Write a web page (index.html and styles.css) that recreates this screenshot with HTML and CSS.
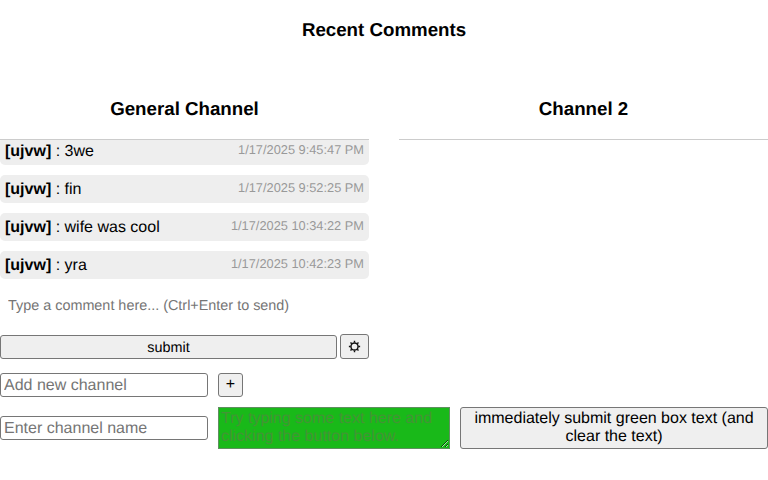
FILE: index.html
```html
<!DOCTYPE html>
<html lang="en">
<head>
<meta charset="utf-8">
<title>Recent Comments</title>
<link rel="stylesheet" href="styles.css">
</head>
<body>
<h3 class="page-title">Recent Comments</h3>
<div class="channels">
  <section class="channel">
    <h3 class="channel-title">General Channel</h3>
    <div class="messages">
      <div class="message"><span><b>[ujvw]</b> : 3we</span><span class="time">1/17/2025 9:45:47 PM</span></div>
      <div class="message"><span><b>[ujvw]</b> : fin</span><span class="time">1/17/2025 9:52:25 PM</span></div>
      <div class="message"><span><b>[ujvw]</b> : wife was cool</span><span class="time">1/17/2025 10:34:22 PM</span></div>
      <div class="message"><span><b>[ujvw]</b> : yra</span><span class="time">1/17/2025 10:42:23 PM</span></div>
    </div>
    <input class="comment" type="text" placeholder="Type a comment here... (Ctrl+Enter to send)">
    <div class="submit-row">
      <button class="btn submit" type="button">submit</button>
      <button class="btn gear" type="button" aria-label="settings">
        <svg class="gear-icon" viewBox="0 0 12 12" width="13" height="13" aria-hidden="true">
          <circle cx="6" cy="6" r="3.3" fill="none" stroke="#111" stroke-width="1.35"/>
          <path d="M6 .8v1.6M6 9.6v1.6M.8 6h1.6M9.6 6h1.6M2.3 2.3l1.2 1.2M8.5 8.5l1.2 1.2M2.3 9.7l1.2-1.2M8.5 3.5l1.2-1.2" fill="none" stroke="#111" stroke-width="1.3"/>
        </svg>
      </button>
    </div>
  </section>
  <section class="channel">
    <h3 class="channel-title">Channel 2</h3>
    <div class="messages"></div>
  </section>
</div>
<div class="add-row">
  <input class="field" type="text" placeholder="Add new channel">
  <button class="btn plus" type="button">+</button>
</div>
<div class="green-row">
  <input class="field" type="text" placeholder="Enter channel name">
  <textarea class="green" placeholder="Try typing some text here and clicking the button below."></textarea>
  <button class="btn immediate" type="button">immediately submit green box text (and clear the text)</button>
</div>
</body>
</html>
```
FILE: styles.css
```css
* { box-sizing: border-box; }
html, body { margin: 0; padding: 0; background: #fff; }
body {
  width: 768px;
  height: 480px;
  overflow: hidden;
  font-family: "Liberation Sans", Arial, sans-serif;
  font-size: 16px;
  color: #000;
  text-rendering: geometricPrecision;
}
.page-title {
  margin: 0;
  padding-top: 19px;
  height: 59px;
  font-size: 18.72px;
  line-height: 22px;
  text-align: center;
}
.channel { width: 369px; }
.channels { display: flex; gap: 30px; }
.channel-title {
  margin: 0;
  padding-top: 39px;
  height: 80px;
  font-size: 18.72px;
  line-height: 22px;
  text-align: center;
}
.messages {
  height: 140px;
  border-top: 1px solid #ccc;
  display: flex;
  flex-direction: column;
  justify-content: flex-end;
  gap: 10px;
  overflow: hidden;
}
.message {
  flex: none;
  height: 28px;
  padding: 6px 5px 0;
  border-radius: 5px;
  background: #eee;
  display: flex;
  justify-content: space-between;
  line-height: 18px;
}
.time { font-size: 12.8px; color: #999; line-height: 13px; }
.comment {
  display: block;
  width: 100%;
  height: 36px;
  margin-top: 9px;
  padding: 0 8px;
  border: 0;
  outline: 0;
  background: transparent;
  font: 14.4px "Liberation Sans", Arial, sans-serif;
  text-rendering: geometricPrecision;
}
.comment::placeholder { color: #757575; }
.submit-row { display: flex; align-items: flex-end; gap: 3px; margin-top: 10px; height: 25px; }
.btn {
  padding: 1px 6px;
  border: 1px solid #767676;
  border-radius: 3px;
  background: #efefef;
  color: #000;
  font-family: "Liberation Sans", Arial, sans-serif;
  text-rendering: geometricPrecision;
}
.submit { width: 337px; height: 24px; padding-top: 2px; padding-bottom: 0; font-size: 14.4px; }
.gear { display: flex; align-items: center; justify-content: center; width: 29px; height: 25px; padding: 0; }
.gear-icon { display: block; }
.add-row { display: flex; gap: 10px; margin-top: 14px; }
.field {
  width: 208px;
  height: 24px;
  padding: 2px 3px 0;
  border: 1px solid #767676;
  border-radius: 3px;
  font: 16px "Liberation Sans", Arial, sans-serif;
  text-rendering: geometricPrecision;
}
.plus { width: 25px; height: 24px; font-size: 16px; }
.green-row { display: flex; align-items: center; gap: 10px; margin-top: 10px; }
.green {
  width: 232px;
  height: 42px;
  padding: 2px;
  border: 1px solid #5f8f5f;
  border-radius: 0;
  background: #19b919;
  font: 16px "Liberation Sans", Arial, sans-serif;
  text-rendering: geometricPrecision;
}
.green::placeholder { color: #449436; opacity: 1; }
.immediate { width: 308px; height: 42px; font-size: 16px; line-height: 18px; }
```
